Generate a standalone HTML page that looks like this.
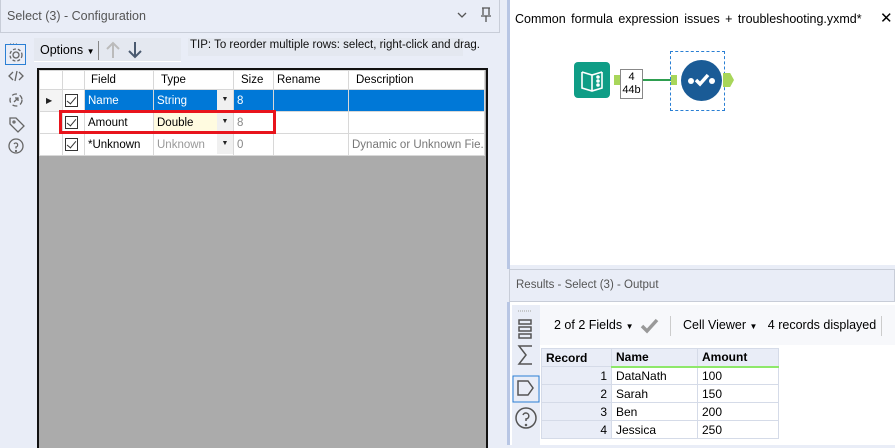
<!DOCTYPE html>
<html><head><style>
*{margin:0;padding:0;box-sizing:border-box}
body{width:895px;height:445px;overflow:hidden;background:#e9edf7;font-family:"Liberation Sans",sans-serif;font-size:12px;color:#000;position:relative}
.a{position:absolute}
table{border-collapse:collapse}
.g td{border:1px solid #d8d8d8;height:22px;padding:0 3px;font-size:11.5px;white-space:nowrap;overflow:hidden}
.g tr.h td{height:19px}
.cb{display:inline-block;width:13px;height:13px;border:1px solid #333;background:#fff;position:relative;vertical-align:middle}
.cb:after{content:"";position:absolute;left:3px;top:0px;width:4px;height:8px;border:solid #333;border-width:0 1.5px 1.5px 0;transform:rotate(40deg)}
.dd{position:absolute;right:0;top:0;width:16px;height:20px;background:#f0f0f0;font-size:7px;text-align:center;line-height:20px;color:#222}
.r td{border:1px solid #d5dbe8;height:18px;padding:0 4px;font-size:12px}
</style></head><body>
<div class="a" style="left:0;top:0;width:500px;height:33px;background:#e9edf7;border:1px solid #c8cdd8;border-top:none"></div>
<div class="a" style="left:7px;top:9px;font-size:12.5px;color:#555">Select (3) - Configuration</div>
<svg class="a" style="left:457px;top:11px" width="10" height="8"><path d="M1 2l4 4 4-4" stroke="#555" stroke-width="1.3" fill="none"/></svg>
<svg class="a" style="left:479px;top:7px" width="14" height="16"><path d="M3 1h8M4 1v7M10 1v7M2 9h10M7 9v6" stroke="#555" stroke-width="1.3" fill="none"/></svg>
<div class="a" style="left:9px;top:36px;font-size:9px;color:#999;letter-spacing:1px">…</div>
<div class="a" style="left:5px;top:44px;width:21px;height:21px;border:1px solid #2a7fd4"></div>
<svg class="a" style="left:6px;top:45px" width="20" height="130" fill="none" stroke="#666" stroke-width="1.3">
<circle cx="10" cy="10" r="3"/><circle cx="10" cy="10" r="6" stroke-dasharray="3 2"/>
<path d="M7 27l-4 4 4 4M13 27l4 4-4 4M11 26l-2 10"/>
<circle cx="10" cy="55" r="6" stroke-dasharray="5 3"/><path d="M8 57l4-4M9 53h3v3"/>
<path d="M4 73v6l8 8 6-6-8-8z"/><circle cx="8" cy="77" r="1"/>
<circle cx="10" cy="101" r="7"/><path d="M8 99a2 2 0 1 1 2 3v1.5"/><circle cx="10" cy="106" r=".5"/>
</svg>
<div class="a" style="left:34px;top:38px;width:147px;height:24px;background:#e4e8f0;border-bottom:1px solid #fff"></div>
<div class="a" style="left:40px;top:43px;font-size:12.5px">Options <span style="font-size:8px">▼</span></div>
<div class="a" style="left:98px;top:41px;width:1px;height:19px;background:#888"></div>
<svg class="a" style="left:104px;top:40px" width="40" height="20" fill="none" stroke-width="2"><path d="M9 18V3M3 9l6-6 6 6" stroke="#bbb"/><path d="M31 2v15M25 11l6 6 6-6" stroke="#4a5a70"/></svg>
<div class="a" style="left:188px;top:38px;width:275px;height:18px;background:#e4e8f0"></div>
<div class="a" style="left:190px;top:39px;font-size:11.5px;color:#111">TIP: To reorder multiple rows: select, right-click and drag.</div>
<div class="a" style="left:37px;top:68px;width:451px;height:380px;background:#ababab;border:2px solid #111;border-bottom:none"></div>
<table class="a g" style="left:39px;top:70px;width:446px;background:#fff;table-layout:fixed">
<colgroup><col style="width:23px"><col style="width:22px"><col style="width:69px"><col style="width:80px"><col style="width:40px"><col style="width:75px"><col></colgroup>
<tr class="h"><td></td><td></td><td style="padding-left:6px">Field</td><td style="padding-left:7px">Type</td><td style="padding-left:7px">Size</td><td>Rename</td><td style="padding-left:7px">Description</td></tr>
<tr style="background:#0078d7;color:#fff"><td style="background:#f4f4f4;color:#222;font-size:8px;padding-left:6px">▶</td><td style="background:#fff;padding-left:2px"><span class="cb"></span></td><td>Name</td><td style="position:relative">String<span class="dd">▼</span></td><td>8</td><td></td><td></td></tr>
<tr><td></td><td style="padding-left:2px"><span class="cb"></span></td><td>Amount</td><td style="position:relative;background:#fffbe0">Double<span class="dd">▼</span></td><td style="color:#888">8</td><td></td><td></td></tr>
<tr><td></td><td style="padding-left:2px"><span class="cb"></span></td><td>*Unknown</td><td style="position:relative;color:#999">Unknown<span class="dd">▼</span></td><td style="color:#888">0</td><td></td><td style="color:#777">Dynamic or Unknown Fie...</td></tr>
</table>
<div class="a" style="left:59px;top:110px;width:217px;height:24px;border:3px solid #e8141c"></div>
<div class="a" style="left:507px;top:0;width:388px;height:265px;background:#fff;border-left:3px solid #b8c6e4"></div>
<div class="a" style="left:515px;top:12px;font-size:12.5px;word-spacing:2px">Common formula expression issues + troubleshooting.yxmd*</div>
<div class="a" style="left:880px;top:9px;font-size:15px">✕</div>
<div class="a" style="left:574px;top:62px;width:36px;height:36px;background:#0f9d86;border-radius:4px"></div>
<svg class="a" style="left:574px;top:62px" width="36" height="36" fill="none" stroke="#fff" stroke-width="1.6"><path d="M8 10v16l10 3 10-3V10M18 13v16M8 10l10 3 10-3"/><circle cx="24" cy="15" r="1" fill="#fff"/><circle cx="24" cy="19" r="1" fill="#fff"/><circle cx="24" cy="23" r="1" fill="#fff"/></svg>
<div class="a" style="left:614px;top:75px;width:7px;height:10px;background:#a8d65a"></div>
<div class="a" style="left:620px;top:69px;width:23px;height:30px;border:1px solid #888;background:#fff;text-align:center;font-size:11px;line-height:13px;padding-top:1px">4<br>44b</div>
<div class="a" style="left:643px;top:79px;width:30px;height:2px;background:#2e9e50"></div>
<div class="a" style="left:671px;top:75px;width:6px;height:10px;background:#a8d65a"></div>
<div class="a" style="left:670px;top:51px;width:55px;height:60px;border:1px dashed #2a7fd4"></div>
<div class="a" style="left:681px;top:60px;width:41px;height:41px;border-radius:50%;background:#1a5b96"></div>
<svg class="a" style="left:681px;top:60px" width="41" height="41" fill="#fff"><circle cx="10" cy="21" r="3"/><circle cx="31" cy="21" r="3"/><path d="M15 20l4 4 8-9" stroke="#fff" stroke-width="3.5" fill="none"/></svg>
<div class="a" style="left:723px;top:73px;width:11px;height:14px;background:#a8d65a;clip-path:polygon(0 0,65% 0,100% 50%,65% 100%,0 100%)"></div>
<div class="a" style="left:507px;top:265px;width:388px;height:4px;background:#e9edf7;border-left:3px solid #b8c6e4"></div>
<div class="a" style="left:509px;top:269px;width:386px;height:33px;background:#e9edf7;border:1px solid #c8cdd8"></div>
<div class="a" style="left:516px;top:279px;font-size:11.5px;color:#555">Results - Select (3) - Output</div>
<div class="a" style="left:507px;top:302px;width:388px;height:143px;background:#fff;border-left:3px solid #b8c6e4"></div>
<div class="a" style="left:512px;top:305px;width:28px;height:140px;background:#e9edf7"></div>
<div class="a" style="left:540px;top:305px;width:355px;height:40px;background:#f7f8fb"></div>
<svg class="a" style="left:512px;top:310px" width="28" height="135" fill="none" stroke="#555" stroke-width="1.5">
<path d="M6 1h14" stroke="#bbb" stroke-dasharray="1 1"/>
<rect x="7" y="10" width="12" height="4"/><rect x="7" y="17" width="12" height="4"/><rect x="7" y="24" width="12" height="4"/>
<path d="M20 36H7l7 9-7 9h13"/>
<rect x="1" y="66" width="26" height="26" stroke="#2a7fd4" stroke-width="1"/>
<path d="M6 71h10l5 7-5 7H6z"/>
<circle cx="14" cy="108" r="10"/><path d="M11 105a3 3 0 1 1 3 4v2"/><circle cx="14" cy="115" r=".5"/>
</svg>
<div class="a" style="left:554px;top:318px;font-size:12.5px">2 of 2 Fields <span style="font-size:8px">▼</span></div>
<svg class="a" style="left:640px;top:318px" width="20" height="16"><path d="M2 8l5 5 10-11" stroke="#999" stroke-width="3.5" fill="none"/></svg>
<div class="a" style="left:670px;top:316px;width:1px;height:20px;background:#ccc"></div>
<div class="a" style="left:683px;top:318px;font-size:12.5px">Cell Viewer <span style="font-size:8px">▼</span> &nbsp; 4 records displayed</div>
<div class="a" style="left:881px;top:316px;width:1px;height:20px;background:#ccc"></div>
<table class="a r" style="left:541px;top:348px;width:238px">
<tr style="background:#e9edf7;font-weight:bold"><td style="width:70px">Record</td><td style="width:86px;border-bottom:2px solid #8ee86a">Name</td><td style="border-bottom:2px solid #8ee86a">Amount</td></tr>
<tr><td style="background:#e9edf7;text-align:right">1</td><td>DataNath</td><td>100</td></tr>
<tr><td style="background:#e9edf7;text-align:right">2</td><td>Sarah</td><td>150</td></tr>
<tr><td style="background:#e9edf7;text-align:right">3</td><td>Ben</td><td>200</td></tr>
<tr><td style="background:#e9edf7;text-align:right">4</td><td>Jessica</td><td>250</td></tr>
</table>
</body></html>
